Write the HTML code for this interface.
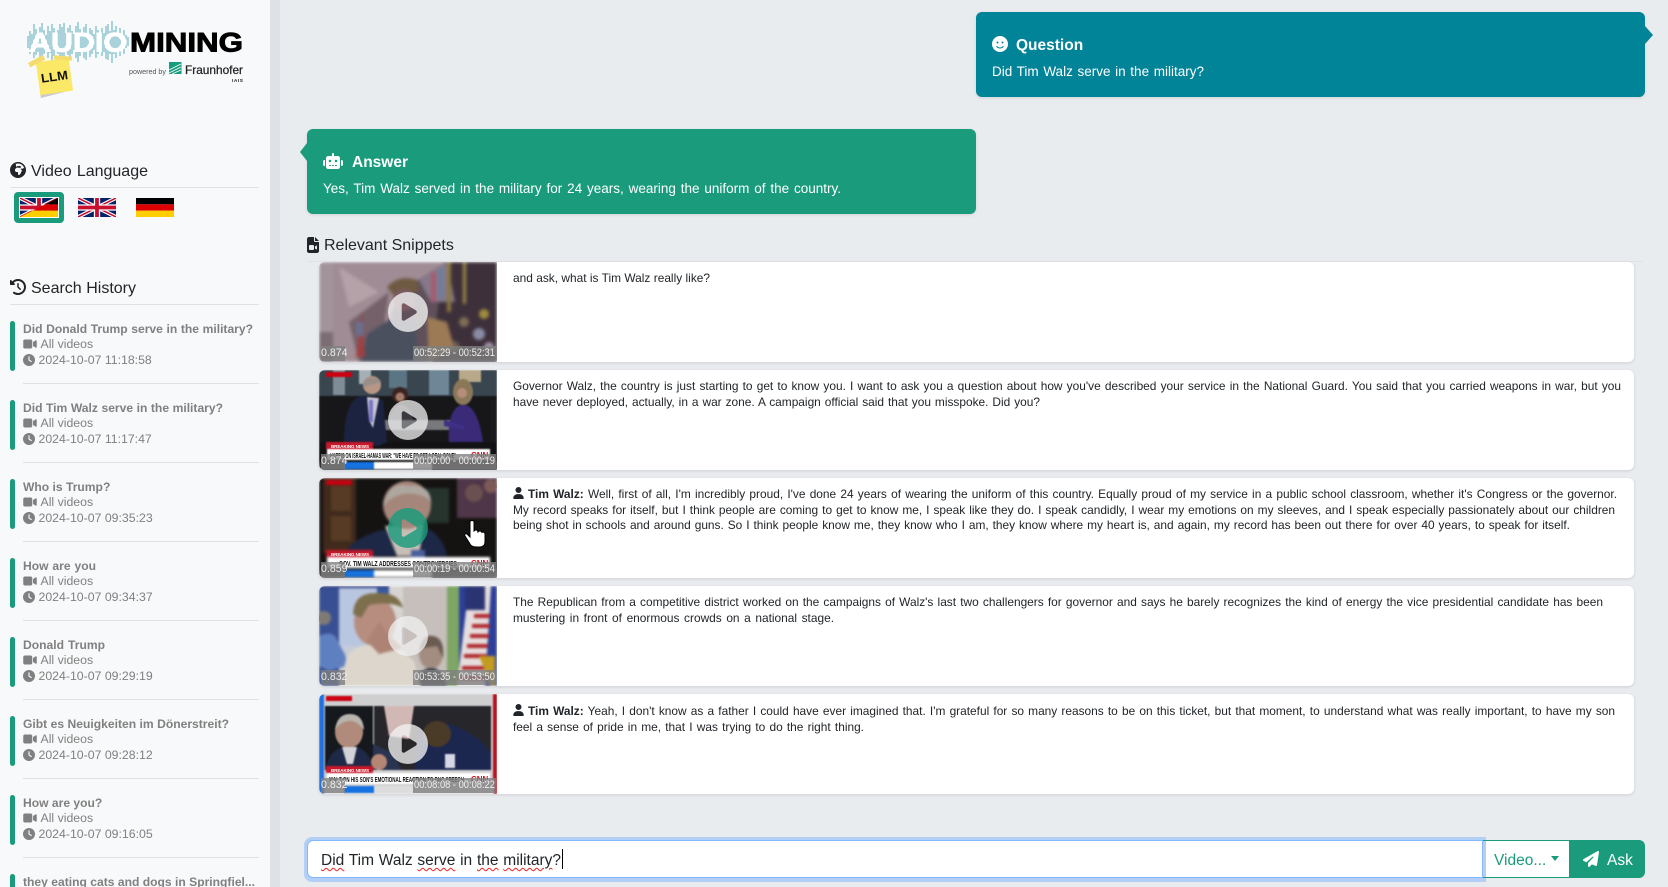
<!DOCTYPE html>
<html lang="en"><head><meta charset="utf-8"><title>Audiomining LLM</title>
<style>
*{box-sizing:border-box}
html,body{margin:0;padding:0;width:1668px;height:887px;overflow:hidden;background:#e9ecef;font-family:"Liberation Sans",sans-serif;color:#212529}
#w{position:relative;width:1668px;height:887px;overflow:hidden;background:#e9ecef}
.a{position:absolute}
.j{position:absolute;white-space:nowrap;text-align:justify;text-align-last:justify}
svg{display:block}
.ic{position:absolute}
.h{font-size:16px;line-height:20px;color:#212529}
.hr{position:absolute;height:1px;background:#dee2e6}
.bar{position:absolute;left:10px;width:5px;height:50px;background:#1a9c7c;border-radius:3px}
.t{font-size:12.1px;line-height:16px;font-weight:bold;color:#808080}
.m{font-size:12.3px;line-height:16px;color:#808080}
.card{position:absolute;left:319px;width:1315px;background:#fff;border-radius:6px;box-shadow:0 1px 3px rgba(0,0,0,.12)}
.thumb{position:absolute;left:319px;width:178px;height:100px;border-radius:6px 0 0 6px;overflow:hidden}
.sc{position:absolute;left:2px;bottom:1px;width:24px;height:15px;background:rgba(128,128,128,.8);color:#eee;font-size:10.6px;line-height:15px;text-align:center}
.tm{position:absolute;right:1px;bottom:1px;width:83px;height:15px;background:rgba(128,128,128,.8);color:#eee;font-size:10.8px;line-height:15px;white-space:nowrap;overflow:hidden}
.tm span{display:block;width:96px;transform:scaleX(.864);transform-origin:0 0;text-align:center}
.s{font-size:11.9px;line-height:16px;color:#212529}
.s b{font-weight:bold}
.bub{position:absolute;border-radius:6px;color:#fff;box-shadow:0 1px 3px rgba(0,0,0,.1)}
u{text-decoration:underline wavy #e22;text-decoration-thickness:1px;text-underline-offset:2px}
</style></head><body><div id="w">
<svg width="0" height="0" style="position:absolute"><defs>
<symbol id="i-earth" viewBox="0 0 512 512"><path d="M177.8 63.2l10 17.4c2.8 4.8 4.2 10.3 4.2 15.9v41.4c0 3.9 1.6 7.7 4.3 10.4c6.2 6.2 16.5 5.7 22-1.2l13.6-17c4.7-5.9 12.9-7.7 19.6-4.3l15.2 7.6c3.4 1.7 7.2 2.6 11 2.6c6.5 0 12.8-2.6 17.4-7.2l3.9-3.9c2.9-2.9 7.3-3.6 11-1.8l29.2 14.6c7.8 3.9 12.6 11.8 12.6 20.5c0 10.5-7.1 19.6-17.3 22.2l-35.4 8.8c-7.4 1.8-15.1 1.5-22.4-.9l-32-10.7c-3.3-1.1-6.7-1.7-10.2-1.7c-7 0-13.8 2.3-19.4 6.5L176 212c-10.1 7.6-16 19.4-16 32v28c0 26.5 21.5 48 48 48h32c8.8 0 16 7.2 16 16v48c0 17.7 14.3 32 32 32c10.1 0 19.6-4.7 25.6-12.8l25.6-34.1c8.3-11.1 12.8-24.6 12.8-38.4V318.6c0-3.9 2.6-7.3 6.4-8.2l5.3-1.3c11.9-3 20.3-13.7 20.3-26c0-7.1-2.8-13.9-7.8-18.9l-33.5-33.5c-3.7-3.7-3.7-9.7 0-13.4c5.7-5.7 14.1-7.7 21.8-5.1l14.1 4.7c12.3 4.1 25.7-1.5 31.5-13c3.5-7 11.2-10.8 18.9-9.2l27.4 5.5C432 112.4 351.5 48 256 48c-27.7 0-54 5.4-78.2 15.2zM0 256a256 256 0 1 1 512 0A256 256 0 1 1 0 256z"/></symbol>
<symbol id="i-hist" viewBox="0 0 512 512"><path d="M75 75L41 41C25.9 25.9 0 36.6 0 57.9V168c0 13.3 10.7 24 24 24H134.1c21.4 0 32.1-25.9 17-41l-30.8-30.8C155 85.5 203 64 256 64c106 0 192 86 192 192s-86 192-192 192c-40.8 0-78.6-12.7-109.7-34.4c-14.5-10.1-34.4-6.6-44.6 7.9s-6.6 34.4 7.9 44.6C151.2 495 201.7 512 256 512c141.4 0 256-114.6 256-256S397.4 0 256 0C185.3 0 121.3 28.7 75 75zm181 53c-13.3 0-24 10.7-24 24V256c0 6.4 2.5 12.5 7 17l72 72c9.4 9.4 24.6 9.4 33.9 0s9.4-24.6 0-33.9l-65-65V152c0-13.3-10.7-24-24-24z"/></symbol>
<symbol id="i-video" viewBox="0 0 576 512"><path d="M0 128C0 92.7 28.7 64 64 64H320c35.3 0 64 28.7 64 64V384c0 35.3-28.7 64-64 64H64c-35.3 0-64-28.7-64-64V128zM559.1 99.8c10.4 5.6 16.9 16.4 16.9 28.2V384c0 11.8-6.5 22.6-16.9 28.2s-23 5-32.9-1.6l-96-64L416 337.1V320 192 174.9l14.2-9.5 96-64c9.8-6.5 22.4-7.2 32.9-1.6z"/></symbol>
<symbol id="i-clock" viewBox="0 0 512 512"><path d="M256 0a256 256 0 1 1 0 512A256 256 0 1 1 256 0zM232 120V256c0 8 4 15.5 10.7 20l96 64c11 7.4 25.9 4.4 33.3-6.7s4.4-25.9-6.7-33.3L280 243.2V120c0-13.3-10.7-24-24-24s-24 10.7-24 24z"/></symbol>
<symbol id="i-smile" viewBox="0 0 512 512"><path d="M256 512A256 256 0 1 0 256 0a256 256 0 1 0 0 512zM164.1 325.5C182 346.2 212.6 368 256 368s74-21.8 91.9-42.5c5.8-6.7 15.9-7.4 22.6-1.6s7.4 15.9 1.6 22.6C349.8 372.1 311.1 400 256 400s-93.8-27.9-116.1-53.5c-5.8-6.7-5.1-16.8 1.6-22.6s16.8-5.1 22.6 1.6zM144.4 208a32 32 0 1 1 64 0 32 32 0 1 1 -64 0zm192-32a32 32 0 1 1 0 64 32 32 0 1 1 0-64z"/></symbol>
<symbol id="i-robot" viewBox="0 0 640 512"><path d="M320 0c17.7 0 32 14.3 32 32V96H472c39.8 0 72 32.2 72 72V440c0 39.8-32.2 72-72 72H168c-39.8 0-72-32.2-72-72V168c0-39.8 32.2-72 72-72H288V32c0-17.7 14.3-32 32-32zM208 384c-8.8 0-16 7.2-16 16s7.2 16 16 16h32c8.8 0 16-7.2 16-16s-7.2-16-16-16H208zm96 0c-8.8 0-16 7.2-16 16s7.2 16 16 16h32c8.8 0 16-7.2 16-16s-7.2-16-16-16H304zm96 0c-8.8 0-16 7.2-16 16s7.2 16 16 16h32c8.8 0 16-7.2 16-16s-7.2-16-16-16H400zM264 256a40 40 0 1 0 -80 0 40 40 0 1 0 80 0zm152 40a40 40 0 1 0 0-80 40 40 0 1 0 0 80zM48 224H64V416H48c-26.5 0-48-21.5-48-48V272c0-26.5 21.5-48 48-48zm544 0c26.5 0 48 21.5 48 48v96c0 26.5-21.5 48-48 48H576V224h16z"/></symbol>
<symbol id="i-file" viewBox="0 0 384 512"><path d="M64 0C28.7 0 0 28.7 0 64V448c0 35.3 28.7 64 64 64H320c35.3 0 64-28.7 64-64V160H256c-17.7 0-32-14.3-32-32V0H64zM256 0V128H384L256 0zM64 288c0-17.7 14.3-32 32-32h96c17.7 0 32 14.3 32 32v96c0 17.7-14.3 32-32 32H96c-17.7 0-32-14.3-32-32V288zM300.9 397.9L256 368V304l44.9-29.9c2-1.3 4.4-2.1 6.8-2.1c6.8 0 12.3 5.5 12.3 12.3V387.7c0 6.8-5.5 12.3-12.3 12.3c-2.4 0-4.8-.7-6.8-2.1z"/></symbol>
<symbol id="i-user" viewBox="0 0 448 512"><path d="M224 256A128 128 0 1 0 224 0a128 128 0 1 0 0 256zm-45.7 48C79.8 304 0 383.8 0 482.3C0 498.7 13.3 512 29.7 512H418.3c16.4 0 29.7-13.3 29.7-29.7C448 383.8 368.2 304 269.7 304H178.3z"/></symbol>
<symbol id="i-plane" viewBox="0 0 512 512"><path d="M498.1 5.6c10.1 7 15.4 19.1 13.5 31.2l-64 416c-1.5 9.7-7.4 18.2-16 23s-18.9 5.4-28 1.6L284 427.7l-68.5 74.1c-8.9 9.7-22.9 12.9-35.2 8.1S160 493.2 160 480V396.4c0-4 1.5-7.8 4.2-10.7L331.8 202.8c5.8-6.3 5.6-16-.4-22s-15.7-6.4-22-.7L106 360.8 17.7 316.6C7.1 311.3 .3 300.7 0 288.9s5.9-22.8 16.1-28.7l448-256c10.7-6.1 23.9-5.5 34 1.4z"/></symbol>
<symbol id="i-play" viewBox="0 0 512 512"><path d="M0 256a256 256 0 1 1 512 0A256 256 0 1 1 0 256zM188.3 147.1c-7.6 4.2-12.3 12.3-12.3 20.9V344c0 8.7 4.7 16.7 12.3 20.9s16.8 4.1 24.3-.5l144-88c7.1-4.4 11.5-12.1 11.5-20.5s-4.4-16.1-11.5-20.5l-144-88c-7.4-4.5-16.7-4.7-24.3-.5z"/></symbol>
<symbol id="f-uk" viewBox="0 0 60 30" preserveAspectRatio="none"><rect width="60" height="30" fill="#012169"/><path d="M0 0L60 30M60 0L0 30" stroke="#fff" stroke-width="6"/><path d="M0 0L60 30M60 0L0 30" stroke="#C8102E" stroke-width="2.4"/><path d="M30 0V30M0 15H60" stroke="#fff" stroke-width="10"/><path d="M30 0V30M0 15H60" stroke="#C8102E" stroke-width="6"/></symbol>
<symbol id="f-de" viewBox="0 0 3 3" preserveAspectRatio="none"><rect width="3" height="1" fill="#000"/><rect y="1" width="3" height="1" fill="#D00"/><rect y="2" width="3" height="1" fill="#FFCE00"/></symbol>
</defs></svg>

<!-- Sidebar -->
<div class="a" style="left:0;top:0;width:270px;height:887px;background:#f8f9fa"></div>
<div class="a" style="left:270px;top:0;width:10px;height:887px;background:#dee2e6"></div>

<!-- Logo -->
<svg class="a" style="left:20px;top:15px" width="235" height="90" viewBox="20 15 235 90">
<path d="M28 36V48M30 31V54M32 34V50M34 24V58M36 29V55M38 33V52M40 27V57M42 23V60M44 30V54M46 35V50M48 26V58M50 31V53M52 24V61M54 28V56M56 34V51M58 30V54M60 24V60M62 27V57M64 23V62M66 33V52M68 28V55M70 25V60M72 31V54M74 34V50M76 26V58M78 22V62M80 29V56M82 33V51M84 27V58M86 24V60M88 35V49M90 28V57M92 30V54M94 34V50M96 26V58M98 30V54M100 35V49M102 28V56M104 33V52M106 26V59M108 24V60M110 31V54M112 21V63M114 30V54M116 26V58M118 33V51M120 28V56M122 35V49M124 30V54M126 35V48M128 37V46" stroke="#3f9db0" stroke-width="1" fill="none" opacity=".85"/>
<text x="29" y="51.5" font-family="Liberation Sans" font-weight="bold" font-size="27" fill="#fff" stroke="#fff" stroke-width="1.1" textLength="98" lengthAdjust="spacingAndGlyphs">AUDIO</text>
<text x="130" y="51.5" font-family="Liberation Sans" font-weight="bold" font-size="27" fill="#000" stroke="#000" stroke-width=".9" textLength="113" lengthAdjust="spacingAndGlyphs">MINING</text>
<text x="129" y="74" font-family="Liberation Sans" font-size="7.5" fill="#555" textLength="37" lengthAdjust="spacingAndGlyphs">powered by</text>
<rect x="169" y="62" width="12.5" height="12" fill="#179c7d"/>
<path d="M169 70L181 64M169 73L181 67M172 74L181 70" stroke="#fff" stroke-width=".9"/>
<text x="185" y="74" font-family="Liberation Sans" font-size="11.6" fill="#222" stroke="#222" stroke-width=".25" textLength="58" lengthAdjust="spacingAndGlyphs">Fraunhofer</text>
<text x="232" y="82" font-family="Liberation Sans" font-weight="bold" font-size="4.8" fill="#222" textLength="11">IAIS</text>
<path d="M40 92L70 88L72 90L41 98Z" fill="#aaa" opacity=".6"/>
<g transform="rotate(-8 54 77)">
<rect x="38" y="60" width="33" height="33" fill="#fbe866"/>
<text x="41" y="81" font-family="Liberation Sans" font-weight="bold" font-size="12.5" fill="#111" textLength="27" lengthAdjust="spacingAndGlyphs">LLM</text>
</g>
<rect x="28" y="59" width="17" height="5" fill="#f3dc6d" transform="rotate(-28 36 61)"/>
<rect x="54" y="56" width="18" height="4" fill="#f3dc6d" transform="rotate(5 63 58)"/>
</svg>

<!-- Video language -->
<svg class="ic" style="left:10px;top:162px" width="16" height="16"><use href="#i-earth" fill="#212529"/></svg>
<div class="j h" style="left:31px;top:162px;width:117px">Video Language</div>
<div class="hr" style="left:10px;top:187px;width:249px"></div>
<div class="a" style="left:14px;top:192px;width:50px;height:31px;background:#1a9c7c;border-radius:4px"></div>
<svg class="a" style="left:19px;top:197px" width="40" height="21" viewBox="0 0 40 21"><rect width="40" height="21" fill="#fff"/>
<svg x="1" y="1" width="38" height="19" viewBox="0 0 38 19"><use href="#f-uk" width="38" height="19"/><path d="M38 0V6.33H25.33Z" fill="#000"/><path d="M25.33 6.33H38V12.67H12.67Z" fill="#D00"/><path d="M12.67 12.67H38V19H0Z" fill="#FFCE00"/></svg></svg>
<svg class="a" style="left:78px;top:198px" width="38" height="19"><use href="#f-uk" width="38" height="19"/></svg>
<svg class="a" style="left:136px;top:198px" width="38" height="19"><use href="#f-de" width="38" height="19"/></svg>

<!-- Search history -->
<svg class="ic" style="left:10px;top:279px" width="16" height="16"><use href="#i-hist" fill="#212529"/></svg>
<div class="j h" style="left:31px;top:279px;width:105px">Search History</div>
<div class="hr" style="left:10px;top:304px;width:249px"></div>

<div class="bar" style="top:321px"></div>
<div class="j t" style="left:23px;top:321px;width:230px">Did Donald Trump serve in the military?</div>
<svg class="ic" style="left:23px;top:338px" width="14" height="12"><use href="#i-video" fill="#808080"/></svg><div class="j m" style="left:40.5px;top:336px;width:52px">All videos</div>
<svg class="ic" style="left:23px;top:354px" width="12" height="12"><use href="#i-clock" fill="#808080"/></svg><div class="j m" style="left:38.5px;top:352px;width:111px">2024-10-07 11:18:58</div>
<div class="hr" style="left:23px;top:383px;width:236px"></div>

<div class="bar" style="top:400px"></div>
<div class="j t" style="left:23px;top:400px;width:200px">Did Tim Walz serve in the military?</div>
<svg class="ic" style="left:23px;top:417px" width="14" height="12"><use href="#i-video" fill="#808080"/></svg><div class="j m" style="left:40.5px;top:415px;width:52px">All videos</div>
<svg class="ic" style="left:23px;top:433px" width="12" height="12"><use href="#i-clock" fill="#808080"/></svg><div class="j m" style="left:38.5px;top:431px;width:111px">2024-10-07 11:17:47</div>
<div class="hr" style="left:23px;top:462px;width:236px"></div>

<div class="bar" style="top:479px"></div>
<div class="j t" style="left:23px;top:479px;width:86px">Who is Trump?</div>
<svg class="ic" style="left:23px;top:496px" width="14" height="12"><use href="#i-video" fill="#808080"/></svg><div class="j m" style="left:40.5px;top:494px;width:52px">All videos</div>
<svg class="ic" style="left:23px;top:512px" width="12" height="12"><use href="#i-clock" fill="#808080"/></svg><div class="j m" style="left:38.5px;top:510px;width:111px">2024-10-07 09:35:23</div>
<div class="hr" style="left:23px;top:541px;width:236px"></div>

<div class="bar" style="top:558px"></div>
<div class="j t" style="left:23px;top:558px;width:73px">How are you</div>
<svg class="ic" style="left:23px;top:575px" width="14" height="12"><use href="#i-video" fill="#808080"/></svg><div class="j m" style="left:40.5px;top:573px;width:52px">All videos</div>
<svg class="ic" style="left:23px;top:591px" width="12" height="12"><use href="#i-clock" fill="#808080"/></svg><div class="j m" style="left:38.5px;top:589px;width:111px">2024-10-07 09:34:37</div>
<div class="hr" style="left:23px;top:620px;width:236px"></div>

<div class="bar" style="top:637px"></div>
<div class="j t" style="left:23px;top:637px;width:82px">Donald Trump</div>
<svg class="ic" style="left:23px;top:654px" width="14" height="12"><use href="#i-video" fill="#808080"/></svg><div class="j m" style="left:40.5px;top:652px;width:52px">All videos</div>
<svg class="ic" style="left:23px;top:670px" width="12" height="12"><use href="#i-clock" fill="#808080"/></svg><div class="j m" style="left:38.5px;top:668px;width:111px">2024-10-07 09:29:19</div>
<div class="hr" style="left:23px;top:699px;width:236px"></div>

<div class="bar" style="top:716px"></div>
<div class="j t" style="left:23px;top:716px;width:206px">Gibt es Neuigkeiten im Dönerstreit?</div>
<svg class="ic" style="left:23px;top:733px" width="14" height="12"><use href="#i-video" fill="#808080"/></svg><div class="j m" style="left:40.5px;top:731px;width:52px">All videos</div>
<svg class="ic" style="left:23px;top:749px" width="12" height="12"><use href="#i-clock" fill="#808080"/></svg><div class="j m" style="left:38.5px;top:747px;width:111px">2024-10-07 09:28:12</div>
<div class="hr" style="left:23px;top:778px;width:236px"></div>

<div class="bar" style="top:795px"></div>
<div class="j t" style="left:23px;top:795px;width:78px">How are you?</div>
<svg class="ic" style="left:23px;top:812px" width="14" height="12"><use href="#i-video" fill="#808080"/></svg><div class="j m" style="left:40.5px;top:810px;width:52px">All videos</div>
<svg class="ic" style="left:23px;top:828px" width="12" height="12"><use href="#i-clock" fill="#808080"/></svg><div class="j m" style="left:38.5px;top:826px;width:111px">2024-10-07 09:16:05</div>
<div class="hr" style="left:23px;top:857px;width:236px"></div>

<div class="bar" style="top:874px"></div>
<div class="j t" style="left:23px;top:874px;width:232px">they eating cats and dogs in Springfiel...</div>

<!-- Question -->
<div class="bub" style="left:976px;top:12px;width:669px;height:85px;background:#018398"></div>
<svg class="a" style="left:1645px;top:26px" width="8" height="18"><path d="M0 0L8 9L0 18Z" fill="#018398"/></svg>
<svg class="ic" style="left:992px;top:36px" width="16" height="16"><use href="#i-smile" fill="#fff"/></svg>
<div class="j" style="left:1016px;top:36px;width:68px;font-size:15.5px;line-height:20px;font-weight:bold;color:#fff">Question</div>
<div class="j" style="left:992px;top:63px;width:212px;font-size:13.5px;line-height:18px;color:#fff">Did Tim Walz serve in the military?</div>

<!-- Answer -->
<div class="bub" style="left:307px;top:129px;width:669px;height:85px;background:#1a9c7c"></div>
<svg class="a" style="left:300px;top:143px" width="7" height="18"><path d="M7 0L0 9L7 18Z" fill="#1a9c7c"/></svg>
<svg class="ic" style="left:323px;top:153px" width="20" height="16"><use href="#i-robot" fill="#fff"/></svg>
<div class="j" style="left:352px;top:153px;width:55px;font-size:15.5px;line-height:20px;font-weight:bold;color:#fff">Answer</div>
<div class="j" style="left:323px;top:180px;width:518px;font-size:13.5px;line-height:18px;color:#fff">Yes, Tim Walz served in the military for 24 years, wearing the uniform of the country.</div>

<!-- Snippets heading -->
<svg class="ic" style="left:307px;top:237px" width="12" height="16"><use href="#i-file" fill="#212529"/></svg>
<div class="j h" style="left:324px;top:236px;width:129px">Relevant Snippets</div>
<div class="hr" style="left:307px;top:261px;width:1336px;background:#dfe3e6"></div>

<!-- Cards -->
<div class="card" style="top:262px;height:100px"></div>
<div class="card" style="top:370px;height:100px"></div>
<div class="card" style="top:478px;height:100px"></div>
<div class="card" style="top:586px;height:100px"></div>
<div class="card" style="top:694px;height:100px"></div>

<!-- Thumb 1 -->
<div class="thumb" style="top:262px">
<svg width="178" height="100" viewBox="0 0 178 100"><g style="filter:blur(1.6px)">
<rect width="178" height="100" fill="#5f505b"/>
<rect width="14" height="100" fill="#a2949a"/><rect y="70" width="14" height="30" fill="#7c6c74"/>
<path d="M14 0H128L80 30L55 100H14Z" fill="#a08c95"/>
<path d="M20 5L60 30L30 45Z" fill="#bda9b1" opacity=".7"/>
<path d="M30 60L70 30L60 100H40Z" fill="#75616a"/>
<path d="M125 0H178V100H112Z" fill="#3d303a"/>
<path d="M100 18L128 0L136 40L112 40Z" fill="#85798a"/>
<rect x="128" y="0" width="4" height="50" fill="#8b7740"/>
<rect x="144" y="0" width="3" height="42" fill="#9c8a45"/>
<rect x="112" y="10" width="5" height="30" fill="#a65a72"/>
<rect x="120" y="6" width="4" height="30" fill="#6a7ea0"/>
<circle cx="165" cy="52" r="5" fill="#a08a40"/><circle cx="145" cy="60" r="5" fill="#7e6c55"/><circle cx="160" cy="72" r="6" fill="#8a8ca5"/><circle cx="135" cy="85" r="6" fill="#6b5a55"/><circle cx="170" cy="85" r="5" fill="#9c90a5"/>
<path d="M68 25Q80 12 98 18L100 30L75 34Z" fill="#6e5a42"/>
<circle cx="85" cy="38" r="11" fill="#7e5a64"/>
<path d="M48 72L70 58L95 60L100 100H42Z" fill="#4a505e"/>
<path d="M108 55L128 60L135 85L110 100Z" fill="#9c7a55"/>
<path d="M37 95L43 50L46 95Z" fill="#a04040"/>
<rect x="37" y="60" width="7" height="14" fill="#6c6f92"/>
</g>
<use href="#i-play" x="69" y="30" width="40" height="40" fill="#f2f2f2" opacity=".8"/></svg>
<div class="sc">0.874</div><div class="tm"><span>00:52:29 - 00:52:31</span></div></div>

<!-- Thumb 2 -->
<div class="thumb" style="top:370px">
<svg width="178" height="100" viewBox="0 0 178 100"><g style="filter:blur(.9px)">
<rect width="178" height="100" fill="#121215"/>
<rect x="0" y="0" width="178" height="28" fill="#39454f"/>
<rect x="14" y="0" width="12" height="25" fill="#7f8d96"/><rect x="40" y="0" width="12" height="14" fill="#a5b0b5"/><rect x="70" y="0" width="18" height="18" fill="#5b7585"/><rect x="110" y="0" width="20" height="25" fill="#6e8695"/><rect x="140" y="0" width="22" height="12" fill="#b8a98a"/>
<rect x="0" y="26" width="178" height="46" fill="#17171a"/>
<rect x="55" y="50" width="90" height="10" fill="#77797d"/>
<path d="M25 75Q25 30 42 26L64 30L68 72L60 76Z" fill="#1c2340"/>
<path d="M48 27L60 28L54 58L50 50Z" fill="#c5c3d6"/><rect x="50" y="30" width="4" height="22" fill="#7a78c4"/>
<circle cx="53" cy="15" r="9" fill="#b79686"/><path d="M44 12Q52 3 62 11L60 13L45 17Z" fill="#9a8f88"/>
<circle cx="81" cy="25" r="8" fill="#3a2420"/><circle cx="81" cy="27" r="4.5" fill="#a57a68"/>
<path d="M70 50Q72 35 82 35Q92 35 94 50Z" fill="#3c3a40"/>
<ellipse cx="144" cy="22" rx="10" ry="13" fill="#8a7858"/><circle cx="143" cy="23" r="5" fill="#b78c78"/>
<path d="M130 72Q128 40 142 35Q158 32 164 72Z" fill="#3a2a78"/>
<path d="M125 50L145 55L145 60L125 56Z" fill="#3f2f85"/>
<rect x="172" y="30" width="6" height="42" fill="#1a1a1c"/>
<rect x="7" y="72" width="47" height="7" fill="#c8182a"/>
<rect x="8" y="79" width="163" height="11" fill="#fff"/>
<rect x="0" y="92" width="178" height="8" fill="#333"/><rect x="25" y="92" width="30" height="7" fill="#1572e0"/><rect x="55" y="92" width="58" height="7" fill="#fff"/>
<rect x="7" y="2" width="26" height="5" fill="#cc0010"/>
</g>
<text x="11" y="88" font-family="Liberation Sans" font-weight="bold" font-size="7" fill="#111" textLength="126" lengthAdjust="spacingAndGlyphs">HARRIS ON ISRAEL-HAMAS WAR: "WE HAVE TO GET A DEAL DONE"</text>
<text x="152" y="88" font-family="Liberation Sans" font-weight="bold" font-size="8" fill="#d01020">CNN</text>
<text x="12" y="78" font-family="Liberation Sans" font-weight="bold" font-size="4.5" fill="#fff" textLength="38">BREAKING NEWS</text>
<use href="#i-play" x="69" y="30" width="40" height="40" fill="#f2f2f2" opacity=".75"/></svg>
<div class="sc">0.874</div><div class="tm"><span>00:00:00 - 00:00:19</span></div></div>

<!-- Thumb 3 -->
<div class="thumb" style="top:478px">
<svg width="178" height="100" viewBox="0 0 178 100"><g style="filter:blur(1.2px)">
<rect width="178" height="100" fill="#151312"/>
<rect x="4" y="0" width="33" height="75" fill="#3f2a1c"/><rect x="12" y="8" width="20" height="25" fill="#573b24"/><rect x="12" y="38" width="20" height="25" fill="#573b24"/>
<rect x="100" y="10" width="30" height="35" fill="#27332d"/>
<rect x="138" y="0" width="40" height="40" fill="#4f3648"/><circle cx="155" cy="15" r="9" fill="#6a5050"/><circle cx="172" cy="8" r="7" fill="#7d5a58"/>
<path d="M25 78Q30 62 62 52L112 52Q125 62 128 78Z" fill="#1d2746"/>
<path d="M66 48L105 46L100 78L78 78Z" fill="#c7beb5"/>
<ellipse cx="88" cy="27" rx="24" ry="24" fill="#a5867a"/>
<path d="M64 28Q70 2 90 8Q112 6 112 25L108 20Q88 10 70 22Z" fill="#aea7a0"/>
<rect x="92" y="72" width="14" height="10" fill="#4a5f9a"/>
<rect x="7" y="72" width="47" height="7" fill="#c8182a"/>
<rect x="8" y="79" width="163" height="11" fill="#fff"/>
<rect x="0" y="92" width="178" height="8" fill="#333"/><rect x="25" y="92" width="30" height="7" fill="#1572e0"/><rect x="55" y="92" width="58" height="7" fill="#fff"/>
<rect x="7" y="2" width="26" height="5" fill="#cc0010"/>
</g>
<text x="20" y="88" font-family="Liberation Sans" font-weight="bold" font-size="7" fill="#111" textLength="118" lengthAdjust="spacingAndGlyphs">GOV. TIM WALZ ADDRESSES CONTROVERSIES</text>
<text x="152" y="88" font-family="Liberation Sans" font-weight="bold" font-size="8" fill="#d01020">CNN</text>
<text x="12" y="78" font-family="Liberation Sans" font-weight="bold" font-size="4.5" fill="#fff" textLength="38">BREAKING NEWS</text>
<use href="#i-play" x="69" y="30" width="40" height="40" fill="#1a9c7c" opacity=".82"/>
<path d="M153 50l0 13-3-3c-2-1-3 1-2 2l5 8c1 2 3 3 6 3h4c3 0 5-2 5-5v-8c0-1-1-2-2-2s-1 0-1 1c0-1-1-2-2-2s-1 0-2 1c0-1-1-2-2-2s-1 0-2 1v-9c0-2-4-2-4 0z" fill="#fff" stroke="#000" stroke-width="1" transform="translate(-2,-4)"/>
</svg>
<div class="sc">0.859</div><div class="tm"><span>00:00:19 - 00:00:54</span></div></div>

<!-- Thumb 4 -->
<div class="thumb" style="top:586px">
<svg width="178" height="100" viewBox="0 0 178 100"><g style="filter:blur(1.2px)">
<rect width="178" height="100" fill="#c8cbd8"/>
<rect x="0" y="0" width="20" height="100" fill="#384f93"/>
<rect x="20" y="0" width="38" height="60" fill="#b9c6e0"/><rect x="58" y="0" width="12" height="30" fill="#3a5aa0"/>
<rect x="0" y="0" width="178" height="2" fill="#2a3a80"/>
<rect x="70" y="0" width="58" height="100" fill="#d6d4d2"/><rect x="84" y="0" width="44" height="100" fill="#c6bfbb"/>
<rect x="128" y="0" width="12" height="100" fill="#7ea664"/>
<rect x="140" y="0" width="38" height="100" fill="#2b3f98"/>
<ellipse cx="112" cy="68" rx="12" ry="15" fill="#a38d80"/><path d="M100 65Q103 48 114 50Q126 52 124 72L118 60L104 62Z" fill="#6a5a50"/>
<path d="M96 100Q100 82 112 82Q124 82 128 100Z" fill="#40434f"/>
<path d="M0 50Q10 45 16 50L24 65Q28 70 27 80L10 85L0 80Z" fill="#5f80c0"/>
<circle cx="5" cy="32" r="7" fill="#807a75"/>
<path d="M150 0L172 0L166 100H138Z" fill="#e6dede"/>
<path d="M151 50L170 50M148 60L169 60M145 70L168 70M143 82L167 82M140 92L166 92M155 30L171 30M153 40L171 40" stroke="#b0272c" stroke-width="4"/>
<rect x="146" y="0" width="20" height="24" fill="#2a3472"/>
<path d="M160 70L172 100H176V70Z" fill="#c29b22"/>
<path d="M28 70Q40 55 60 60L72 55L95 75L102 100H20Z" fill="#dcd6cc"/>
<ellipse cx="56" cy="36" rx="21" ry="24" fill="#b68d7e"/>
<path d="M34 28Q35 6 58 7Q80 6 84 22Q72 15 50 19L42 32Z" fill="#7e6f4c"/>
<path d="M60 36Q75 55 84 62L60 68L48 55Z" fill="#ad8375"/>
</g>
<use href="#i-play" x="69" y="30" width="40" height="40" fill="#f2f2f2" opacity=".75"/></svg>
<div class="sc">0.832</div><div class="tm"><span>00:53:35 - 00:53:50</span></div></div>

<!-- Thumb 5 -->
<div class="thumb" style="top:694px">
<svg width="178" height="100" viewBox="0 0 178 100"><g style="filter:blur(.9px)">
<rect width="178" height="100" fill="#cfcfd0"/>
<rect x="0" y="0" width="5" height="100" fill="#1f6fe0"/>
<rect x="174" y="0" width="4" height="100" fill="#b8101f"/>
<rect x="6" y="12" width="48" height="64" fill="#15181d"/>
<ellipse cx="30" cy="38" rx="14" ry="16" fill="#b08b7c"/><path d="M16 36Q18 20 31 20Q44 20 45 36Q38 27 31 27Q22 27 16 36Z" fill="#b8b3ac"/>
<path d="M7 76Q8 58 24 53L38 53Q52 58 54 76Z" fill="#1e2947"/><path d="M23 53L38 53L34 70L28 70Z" fill="#d4d4d8"/>
<rect x="55" y="12" width="117" height="64" fill="#27262b"/>
<path d="M65 12L95 12L90 45L70 42Z" fill="#d2b8b4"/>
<path d="M54 50Q65 55 75 60L82 76H54Z" fill="#2a3350"/><ellipse cx="60" cy="68" rx="8" ry="8" fill="#b58674"/>
<path d="M100 40Q110 28 130 30Q160 40 172 60V76H95Z" fill="#1c2750"/>
<ellipse cx="118" cy="40" rx="14" ry="13" fill="#4a3a28"/>
<rect x="126" y="60" width="10" height="14" fill="#d6d6e6"/>
<rect x="7" y="72" width="47" height="7" fill="#c8182a"/>
<rect x="8" y="79" width="163" height="11" fill="#fff"/>
<rect x="5" y="92" width="170" height="8" fill="#ddd"/><rect x="25" y="92" width="30" height="7" fill="#1572e0"/>
<rect x="7" y="2" width="26" height="5" fill="#cc0010"/>
</g>
<text x="10" y="88" font-family="Liberation Sans" font-weight="bold" font-size="7" fill="#111" textLength="135" lengthAdjust="spacingAndGlyphs">WALZ ON HIS SON'S EMOTIONAL REACTION TO DNC SPEECH</text>
<text x="152" y="88" font-family="Liberation Sans" font-weight="bold" font-size="8" fill="#d01020">CNN</text>
<text x="12" y="78" font-family="Liberation Sans" font-weight="bold" font-size="4.5" fill="#fff" textLength="38">BREAKING NEWS</text>
<use href="#i-play" x="69" y="30" width="40" height="40" fill="#f2f2f2" opacity=".78"/></svg>
<div class="sc">0.832</div><div class="tm"><span>00:08:08 - 00:08:22</span></div></div>

<!-- Snippet texts -->
<div class="j s" style="left:513px;top:270px;width:197px">and ask, what is Tim Walz really like?</div>

<div class="j s" style="left:513px;top:378px;width:1108px">Governor Walz, the country is just starting to get to know you. I want to ask you a question about how you've described your service in the National Guard. You said that you carried weapons in war, but you</div>
<div class="j s" style="left:513px;top:394px;width:527px">have never deployed, actually, in a war zone. A campaign official said that you misspoke. Did you?</div>

<svg class="ic" style="left:513px;top:487px" width="11" height="12"><use href="#i-user" fill="#212529"/></svg>
<div class="j s" style="left:528px;top:486px;width:1089px"><b>Tim Walz:</b> Well, first of all, I'm incredibly proud, I've done 24 years of wearing the uniform of this country. Equally proud of my service in a public school classroom, whether it's Congress or the governor.</div>
<div class="j s" style="left:513px;top:502px;width:1102px">My record speaks for itself, but I think people are coming to get to know me, I speak like they do. I speak candidly, I wear my emotions on my sleeves, and I speak especially passionately about our children</div>
<div class="j s" style="left:513px;top:517px;width:1057px">being shot in schools and around guns. So I think people know me, they know who I am, they know where my heart is, and again, my record has been out there for over 40 years, to speak for itself.</div>

<div class="j s" style="left:513px;top:594px;width:1090px">The Republican from a competitive district worked on the campaigns of Walz's last two challengers for governor and says he barely recognizes the kind of energy the vice presidential candidate has been</div>
<div class="j s" style="left:513px;top:610px;width:321px">mustering in front of enormous crowds on a national stage.</div>

<svg class="ic" style="left:513px;top:704px" width="11" height="12"><use href="#i-user" fill="#212529"/></svg>
<div class="j s" style="left:528px;top:703px;width:1087px"><b>Tim Walz:</b> Yeah, I don't know as a father I could have ever imagined that. I'm grateful for so many reasons to be on this ticket, but that moment, to understand what was really important, to have my son</div>
<div class="j s" style="left:513px;top:719px;width:351px">feel a sense of pride in me, that I was trying to do the right thing.</div>

<!-- Input -->
<div class="a" style="left:304px;top:837px;width:1182px;height:45px;background:#b4cff6;border-radius:8px 0 0 8px"></div>
<div class="a" style="left:307px;top:840px;width:1176px;height:38px;background:#fff;border:1px solid #86b7fe;border-radius:6px 0 0 6px"></div>
<div class="j" style="left:321px;top:851px;width:240px;font-size:15.5px;line-height:20px"><u>Did</u> Tim Walz <u>serve</u> in <u>the</u> <u>military</u>?</div>
<div class="a" style="left:562px;top:849px;width:1px;height:20px;background:#000"></div>
<div class="a" style="left:1486px;top:840px;width:84px;height:38px;background:#fff;border:1px solid #1a9c7c;border-left:0"></div>
<div class="a" style="left:1483px;top:840px;width:3px;height:1px;background:#1a9c7c"></div>
<div class="a" style="left:1483px;top:877px;width:3px;height:1px;background:#1a9c7c"></div>
<div class="a" style="left:1494px;top:851px;font-size:15.5px;line-height:20px;color:#1a9c7c;white-space:nowrap">Video...</div>
<svg class="a" style="left:1551px;top:856px" width="8" height="5"><path d="M0 0H8L4 5Z" fill="#1a9c7c"/></svg>
<div class="a" style="left:1570px;top:840px;width:75px;height:38px;background:#1a9c7c;border-radius:0 6px 6px 0"></div>
<svg class="ic" style="left:1583px;top:851px" width="16" height="16"><use href="#i-plane" fill="#fff"/></svg>
<div class="a" style="left:1607px;top:851px;font-size:15.5px;line-height:20px;color:#fff;white-space:nowrap">Ask</div>
</div></body></html>
